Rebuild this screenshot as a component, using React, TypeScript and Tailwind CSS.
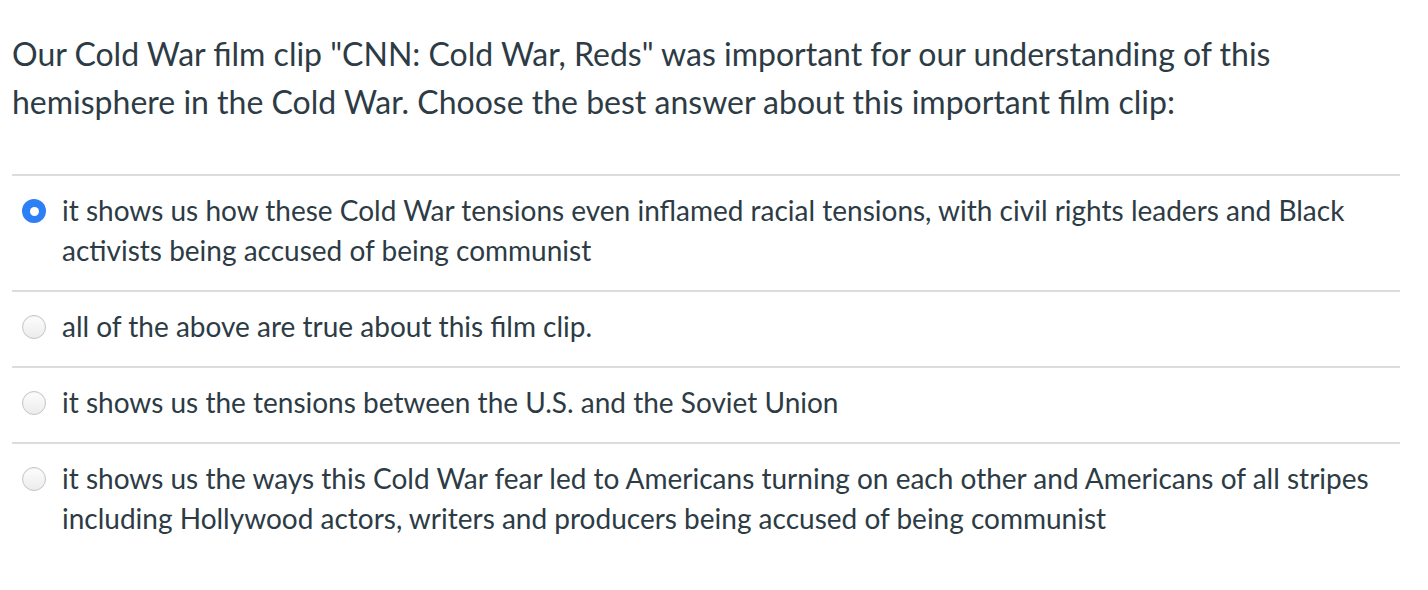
import React from 'react';

const answers = [
  {
    text: 'it shows us how these Cold War tensions even inflamed racial tensions, with civil rights leaders and Black activists being accused of being communist',
    selected: true,
  },
  { text: 'all of the above are true about this film clip.', selected: false },
  { text: 'it shows us the tensions between the U.S. and the Soviet Union', selected: false },
  {
    text: 'it shows us the ways this Cold War fear led to Americans turning on each other and Americans of all stripes including Hollywood actors, writers and producers being accused of being communist',
    selected: false,
  },
];

function Radio({ selected }: { selected: boolean }) {
  if (selected) {
    return (
      <span className="mt-[9px] flex h-[24px] w-[24px] shrink-0 items-center justify-center rounded-full bg-[#2d7ff5]">
        <span className="h-[9px] w-[9px] rounded-full bg-white" />
      </span>
    );
  }
  return (
    <span className="mt-[9px] h-[24px] w-[24px] shrink-0 rounded-full border border-[#c4c4c4] bg-gradient-to-b from-[#fdfdfd] to-[#ececec] shadow-[inset_0_1px_1px_rgba(0,0,0,0.04)]" />
  );
}

export default function App() {
  return (
    <div className="min-h-screen bg-white font-['Lato','Liberation_Sans',sans-serif] text-[#2d3b45]">
      <div className="w-[1400px] pl-[12px]">
        <p className="pr-[12px] pt-[30px] text-[32px] leading-[48px]">
          Our Cold War film clip "CNN: Cold War, Reds" was important for our understanding of this hemisphere in the Cold War. Choose the best answer about this important film clip:
        </p>

        <div className="mt-[48px]">
          {answers.map((a, i) => (
            <div key={i} className="flex gap-[16px] border-t-2 border-[#dcdcdc] pb-[20px] pl-[10px] pt-[14px]">
              <Radio selected={a.selected} />
              <span className="pr-[20px] text-[28px] leading-[40px]">{a.text}</span>
            </div>
          ))}
        </div>
      </div>
    </div>
  );
}
